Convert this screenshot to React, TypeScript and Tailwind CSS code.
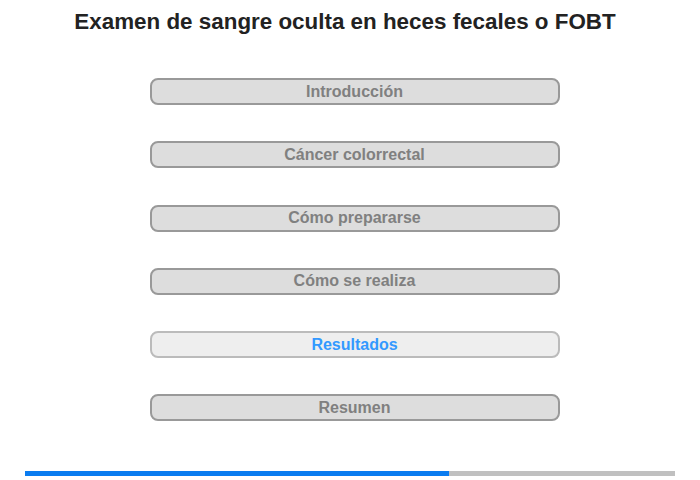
const sections = [
  { label: "Introducción", active: false },
  { label: "Cáncer colorrectal", active: false },
  { label: "Cómo prepararse", active: false },
  { label: "Cómo se realiza", active: false },
  { label: "Resultados", active: true },
  { label: "Resumen", active: false },
];

export default function App() {
  return (
    <div className="w-[700px] h-[480px] bg-white font-['Liberation_Sans',Arial,sans-serif] flex flex-col items-center">
      <h1 className="mt-[8px] mr-[10px] text-[22.4px] leading-[28px] font-bold text-[#222]">
        Examen de sangre oculta en heces fecales o FOBT
      </h1>

      <nav className="mt-[42px] ml-[9px] flex flex-col gap-[36.3px]">
        {sections.map((s) => (
          <button
            key={s.label}
            className={`w-[410px] h-[27px] rounded-[8px] border-2 text-[16px] font-bold leading-none ${
              s.active
                ? "bg-[#eeeeee] border-[#bbbbbb] text-[#3399ff]"
                : "bg-[#dddddd] border-[#999999] text-[#808080]"
            }`}
          >
            {s.label}
          </button>
        ))}
      </nav>

      <div className="mt-auto mb-[4px] w-[650px] h-[5px] bg-[#c0c0c0] flex">
        <div className="w-[424px] h-full bg-[#0a7cf0]" />
      </div>
    </div>
  );
}
